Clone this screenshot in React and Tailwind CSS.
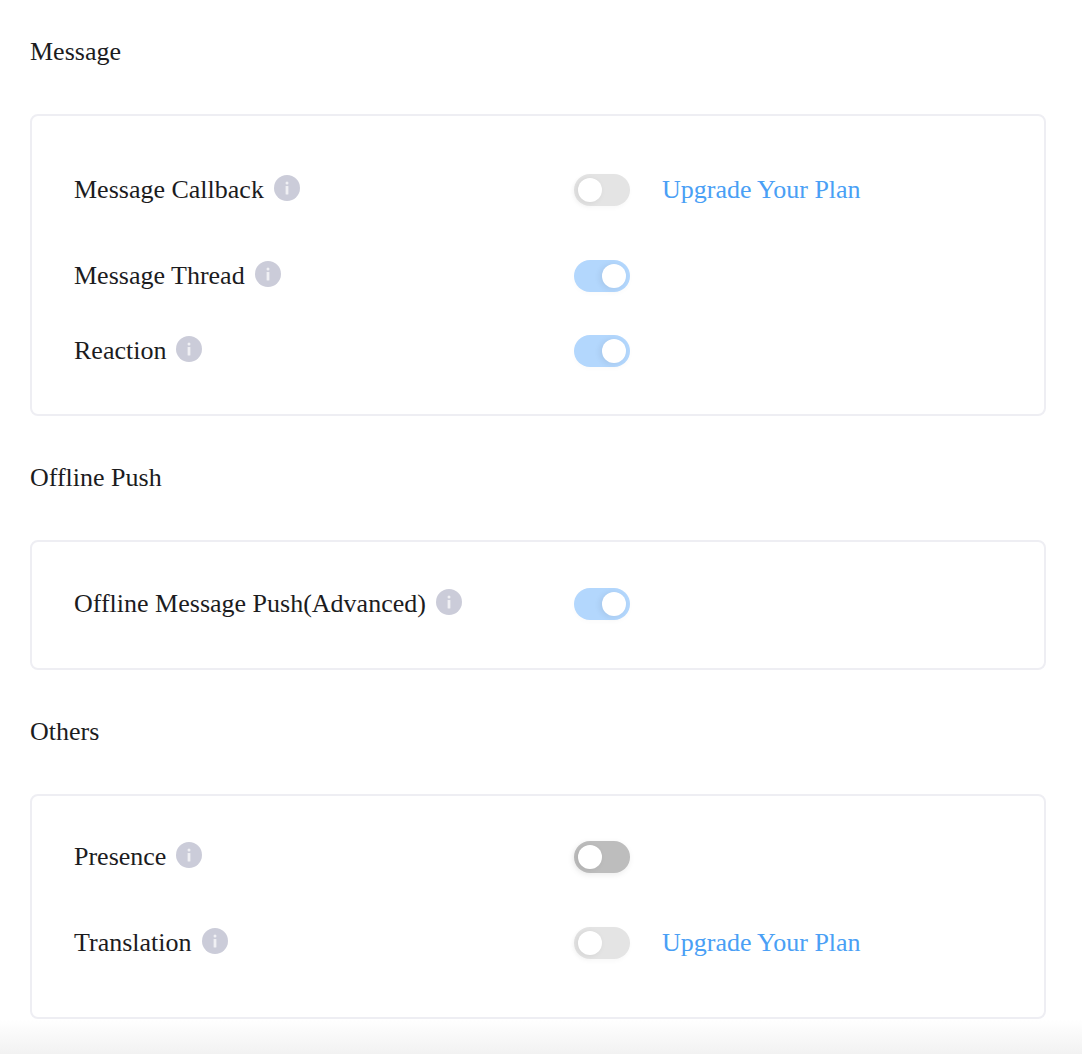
import React from "react";

function InfoDot() {
  return (
    <span className="ml-[10px] -mt-1 w-[26px] h-[26px] rounded-full bg-[#cbccd9] flex items-center justify-center shrink-0">
      <svg width="6" height="14" viewBox="0 0 6 14">
        <rect x="1.5" y="0.5" width="3" height="3" rx="1.5" fill="#fff" opacity="0.7" />
        <rect x="1.6" y="5" width="2.8" height="8.5" rx="0.6" fill="#fff" opacity="0.7" />
      </svg>
    </span>
  );
}

function Toggle({ state }) {
  const track = {
    on: "bg-[#b3d7fd] justify-end",
    off: "bg-[#e4e4e4] justify-start",
    grey: "bg-[#bdbdbd] justify-start",
  }[state];
  const shadow = {
    on: "shadow-[0_2px_5px_rgba(0,0,0,0.02)]",
    off: "shadow-[-1px_2px_5px_rgba(0,0,0,0.03)]",
    grey: "shadow-[-1px_2px_6px_rgba(0,0,0,0.08)]",
  }[state];
  return (
    <span className={`w-14 h-8 rounded-full flex items-center px-1 ${track} ${shadow}`}>
      <span className="w-6 h-6 rounded-full bg-white shadow-[-2px_1px_6px_rgba(0,0,0,0.08)]" />
    </span>
  );
}

function Row({ label, state, upgrade, className }) {
  return (
    <div className={`flex items-center h-8 ${className}`}>
      <div className="w-[500px] flex items-center">
        <span className="leading-8">{label}</span>
        <InfoDot />
      </div>
      <Toggle state={state} />
      {upgrade && <a className="ml-8 text-[#4a9ff5] leading-8">Upgrade Your Plan</a>}
    </div>
  );
}

function Section({ title, children, className }) {
  return (
    <section className={className}>
      <h2 className="leading-8 mb-[46px] font-normal">{title}</h2>
      <div className="border-2 border-[#eeeef3] rounded-lg pl-[42px] pt-[45px] pb-[47px] pr-4">{children}</div>
    </section>
  );
}

export default function App() {
  return (
    <div className="relative h-[1054px] overflow-hidden bg-white pl-[30px] pr-[36px] pt-9 text-[26px] text-[#1c1c1e] font-['Liberation_Serif',serif]">
      <Section title="Message">
        <Row label="Message Callback" state="off" upgrade className="mt-[13px]" />
        <Row label="Message Thread" state="on" className="mt-[54px]" />
        <Row label="Reaction" state="on" className="mt-[43px]" />
      </Section>
      <Section title="Offline Push" className="mt-[46px]">
        <Row label="Offline Message Push(Advanced)" state="on" className="my-px" />
      </Section>
      <Section title="Others" className="mt-[46px]">
        <Row label="Presence" state="grey" />
        <Row label="Translation" state="off" upgrade className="mt-[54px] mb-[11px]" />
      </Section>
      <div className="absolute inset-x-0 bottom-0 h-[34px] bg-gradient-to-b from-white/0 to-[#f2f2f2]" />
    </div>
  );
}
